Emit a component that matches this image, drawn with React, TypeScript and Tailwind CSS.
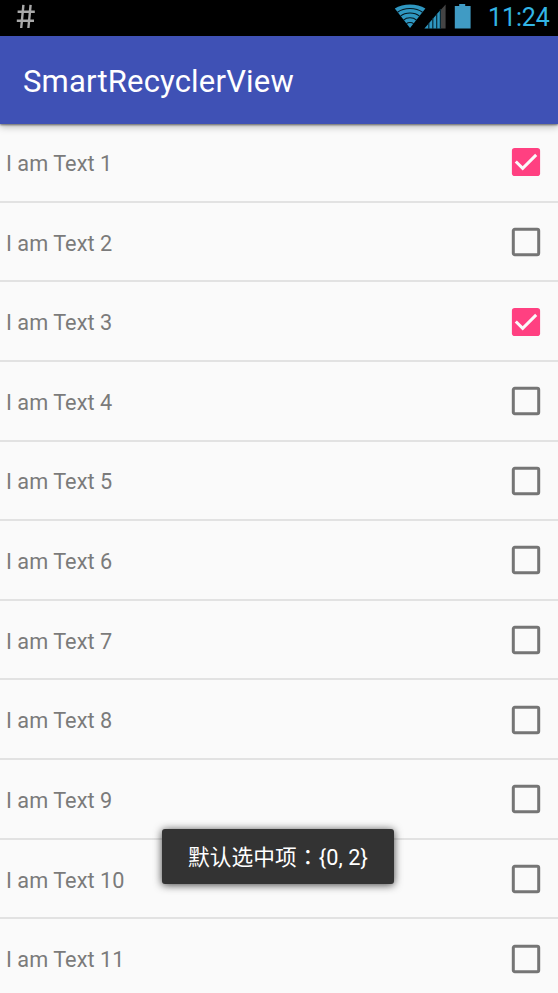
import React from 'react';

const items = Array.from({ length: 11 }, (_, i) => ({
  label: `I am Text ${i + 1}`,
  checked: i === 0 || i === 2,
}));

function StatusBar() {
  return (
    <div className="flex h-9 shrink-0 items-start bg-black">
      <svg width="20" height="26" viewBox="0 0 20 26" className="ml-4 mt-[4px]" fill="none" stroke="#a9a9a9" strokeWidth="2.4">
        <path d="M7.4 .8 5.2 24M14.6 .8 12.4 24M1.6 7.8H18.8M.8 16.8H18" />
      </svg>
      <svg width="80" height="30" viewBox="0 0 80 30" className="ml-auto">
        <path d="M.8 8.5C9 3 23 3 31.4 8.5L16 28Z" fill="#2f97c1" />
        <g fill="none" stroke="#061720" strokeWidth="1.1">
          <path d="M3.5 12.2C10 7.2 22 7.2 28.5 12.2M6.5 16.2C11.5 12 20.5 12 25.5 16.2M9.5 20.1C13 17 19 17 22.5 20.1M12.2 23.8C14.3 22 17.7 22 19.8 23.8" />
        </g>
        <path d="M30.4 28.6 46 10.6V28.6Z" fill="#2f97c1" />
        <path d="M46.2 10.4 51.6 4.4V28.6H46.2Z" fill="#444" />
        <path d="M34.8 23V29M38.8 18V29M42.7 14V29M46.4 9V29" stroke="#092a38" strokeWidth="1.2" />
        <path d="M60.8 6H65.2V4H71.2V6H76.6V28.6H60.8Z" fill="#409bc4" />
      </svg>
      <span className="ml-[14px] mr-2 w-[62px] whitespace-nowrap text-[25px] leading-[35px] tracking-[-0.1px] text-[#33b5e5]">11:24</span>
    </div>
  );
}

function Checkbox({ checked }: { checked: boolean }) {
  return (
    <svg width="30" height="30" viewBox="0 0 30 30" className="mr-[17px] mt-[0.8px] shrink-0">
      {checked ? (
        <>
          <rect x=".9" y=".9" width="28.2" height="28.2" rx="2.8" fill="#ff4081" />
          <path d="M4.8 14.5 11.7 21.3 25.2 7.9" fill="none" stroke="#fafafa" strokeWidth="3" />
        </>
      ) : (
        <rect x="2.3" y="2.3" width="25.4" height="25.4" rx="1.5" fill="none" stroke="#757575" strokeWidth="3" />
      )}
    </svg>
  );
}

export default function App() {
  return (
    <div className="relative flex h-[993px] w-full flex-col overflow-hidden bg-[#fafafa] font-[Roboto,'Noto_Sans_CJK_SC',sans-serif]">
      <StatusBar />
      <header className="z-10 flex h-[87.5px] shrink-0 items-center bg-[#3f51b5] pl-[23px] shadow-[0_1px_2px_rgba(0,0,0,0.5),0_3px_7px_rgba(0,0,0,0.25)]">
        <h1 className="mt-[4px] text-[31px] leading-9 tracking-[0.18px] text-white">SmartRecyclerView</h1>
      </header>
      <ul className="-mt-[0.4px]">
        {items.map((item) => (
          <li key={item.label} className="flex h-[79.63px] flex-col">
            <div className="flex grow items-center justify-between pl-[6px]">
              <span className="mt-[4px] text-[21.7px] leading-7 tracking-[0.03px] text-[#7b7b7b]">{item.label}</span>
              <Checkbox checked={item.checked} />
            </div>
            <div className="h-[2px] shrink-0 bg-[#e2e2e2]" />
          </li>
        ))}
      </ul>
      <div className="absolute left-[162px] top-[829px] flex h-[55px] w-[232px] items-center justify-center rounded-[3px] bg-[#333] shadow-[0_1px_8px_rgba(0,0,0,0.75)]">
        <span className="mt-[1px] whitespace-nowrap text-[21.7px] leading-7 tracking-[0.1px] text-white">
          默认选中项<span className="font-['Noto_Sans_CJK_TC',sans-serif]" lang="zh-TW">：</span>{'{0, 2}'}
        </span>
      </div>
    </div>
  );
}
